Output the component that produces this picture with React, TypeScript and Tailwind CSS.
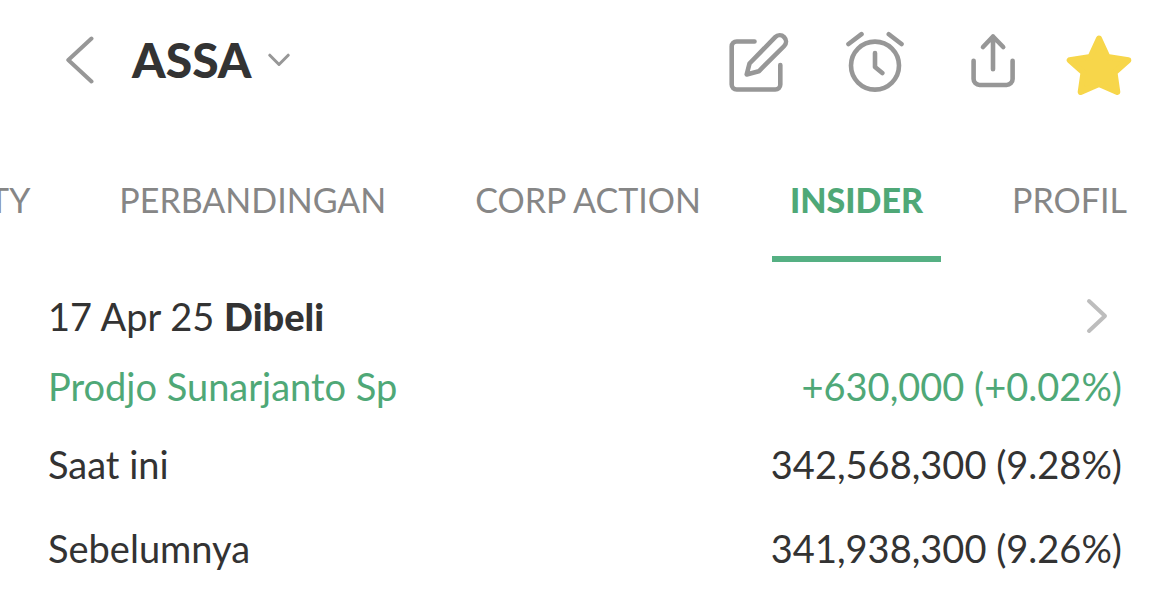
interface Tab {
  id: string;
  label: string;
}

interface HoldingRow {
  label: string;
  value: string;
}

const tabs: Tab[] = [
  { id: "previous", label: "TY" },
  { id: "comparison", label: "PERBANDINGAN" },
  { id: "corp-action", label: "CORP ACTION" },
  { id: "insider", label: "INSIDER" },
  { id: "profile", label: "PROFIL" },
];

const holdings: HoldingRow[] = [
  { label: "Saat ini", value: "342,568,300 (9.28%)" },
  { label: "Sebelumnya", value: "341,938,300 (9.26%)" },
];

const iconProps = {
  fill: "none",
  stroke: "currentColor",
  strokeWidth: 4.6,
  strokeLinecap: "round",
  strokeLinejoin: "round",
  "aria-hidden": true,
} as const;

function BackIcon() {
  return (
    <svg width="28" height="48" viewBox="0 0 28 48" {...iconProps} strokeWidth={4}>
      <path d="M25.5 2.5 2.3 24 25.5 45.5" />
    </svg>
  );
}

function DownIcon() {
  return (
    <svg width="22" height="14" viewBox="0 0 22 14" {...iconProps} strokeWidth={3}>
      <path d="M1.8 2.2 11 11.5 20.2 2.2" />
    </svg>
  );
}

function NextIcon() {
  return (
    <svg width="22" height="36" viewBox="0 0 22 36" {...iconProps} strokeWidth={4}>
      <path d="M3 3 19 18 3 33" />
    </svg>
  );
}

function EditIcon() {
  return (
    <svg width="60" height="62" viewBox="0 -2 60 62" {...iconProps}>
      <path d="M25.5 9.5H7.7a5 5 0 0 0-5 5v38a5 5 0 0 0 5 5h38.6a5 5 0 0 0 5-5V33" />
      <path d="M20.5 31.5 46.2 5.2a6.2 6.2 0 0 1 9 8.8L29.8 39.3 17.7 42.5Z" />
    </svg>
  );
}

function AlarmIcon() {
  return (
    <svg width="60" height="62" viewBox="0 -2 60 62" {...iconProps}>
      <circle cx="29" cy="33.6" r="24" />
      <path d="M29 21V35l7.3 6M2.5 12 15.5 2.2M42.8 2.2 55.5 12" />
    </svg>
  );
}

function ShareIcon() {
  return (
    <svg width="44" height="62" viewBox="0 -2 44 62" {...iconProps}>
      <path d="M2.6 28.7V47a6 6 0 0 0 6 6h27a6 6 0 0 0 6-6V28.7" />
      <path d="M22 37.3V4.5M12 15 22 4.5 32.2 15" />
    </svg>
  );
}

function StarIcon() {
  return (
    <svg
      width="66"
      height="72"
      viewBox="0 -8 66 72"
      fill="#f7d64a"
      stroke="#f7d64a"
      strokeWidth="6"
      strokeLinejoin="round"
      aria-hidden="true"
    >
      <path d="M33 5.5 41.5 24 62.3 27.3 48.5 39.5 51.3 59 33 51 14.7 59 17.5 39.5 3.7 27.3 24.5 24Z" />
    </svg>
  );
}

function Header() {
  return (
    <header className="flex h-[122px] items-center justify-between pr-[38px] pl-[66px] text-[#979797]">
      <div className="flex items-center pb-0.5">
        <button type="button" aria-label="Kembali">
          <BackIcon />
        </button>
        <button type="button" className="ml-[38px] flex items-center gap-4">
          <h1 className="text-[48px] leading-[60px] font-black text-[#333333]">
            ASSA
          </h1>
          <DownIcon />
        </button>
      </div>
      <div className="flex items-center gap-10">
        <div className="flex gap-[51px]">
          <button type="button" aria-label="Catatan" className="flex w-[66px] justify-center">
            <EditIcon />
          </button>
          <button type="button" aria-label="Alarm" className="flex w-[66px] justify-center">
            <AlarmIcon />
          </button>
          <button type="button" aria-label="Bagikan" className="flex w-[66px] justify-center">
            <ShareIcon />
          </button>
        </div>
        <button type="button" aria-label="Favorit">
          <StarIcon />
        </button>
      </div>
    </header>
  );
}

function TabBar({ active }: { active: string }) {
  return (
    <nav className="flex justify-end gap-[53px] overflow-hidden pt-[54px] pr-[25px]">
      {tabs.map((tab) => (
        <a
          key={tab.id}
          href={`#${tab.id}`}
          aria-current={tab.id === active ? "page" : undefined}
          className={
            tab.id === active
              ? "shrink-0 border-b-[6px] border-[#55b083] px-[18px] pb-8 text-[34px] leading-[48px] font-black whitespace-nowrap text-[#4fa877]"
              : "shrink-0 border-b-[6px] border-transparent px-[18px] pb-8 text-[34px] leading-[48px] whitespace-nowrap text-[#868686]"
          }
        >
          {tab.label}
        </a>
      ))}
    </nav>
  );
}

function InsiderEntry() {
  return (
    <article className="px-12 pt-[30px] text-[38px] leading-[48px] text-[#333333]">
      <a href="#detail" className="flex items-center justify-between pr-[14px]">
        <h2>
          17 Apr 25 <strong className="font-black">Dibeli</strong>
        </h2>
        <span className="text-[#bdbdbd]">
          <NextIcon />
        </span>
      </a>
      <dl className="mt-[22px] flex justify-between text-[#4fa877]">
        <dt>Prodjo Sunarjanto Sp</dt>
        <dd>+630,000 (+0.02%)</dd>
      </dl>
      <dl className="mt-[30px] flex flex-col gap-9">
        {holdings.map((row) => (
          <div key={row.label} className="flex justify-between">
            <dt>{row.label}</dt>
            <dd>{row.value}</dd>
          </div>
        ))}
      </dl>
    </article>
  );
}

export default function App() {
  return (
    <main className="min-h-screen bg-white font-['Lato',sans-serif]">
      <Header />
      <TabBar active="insider" />
      <InsiderEntry />
    </main>
  );
}
